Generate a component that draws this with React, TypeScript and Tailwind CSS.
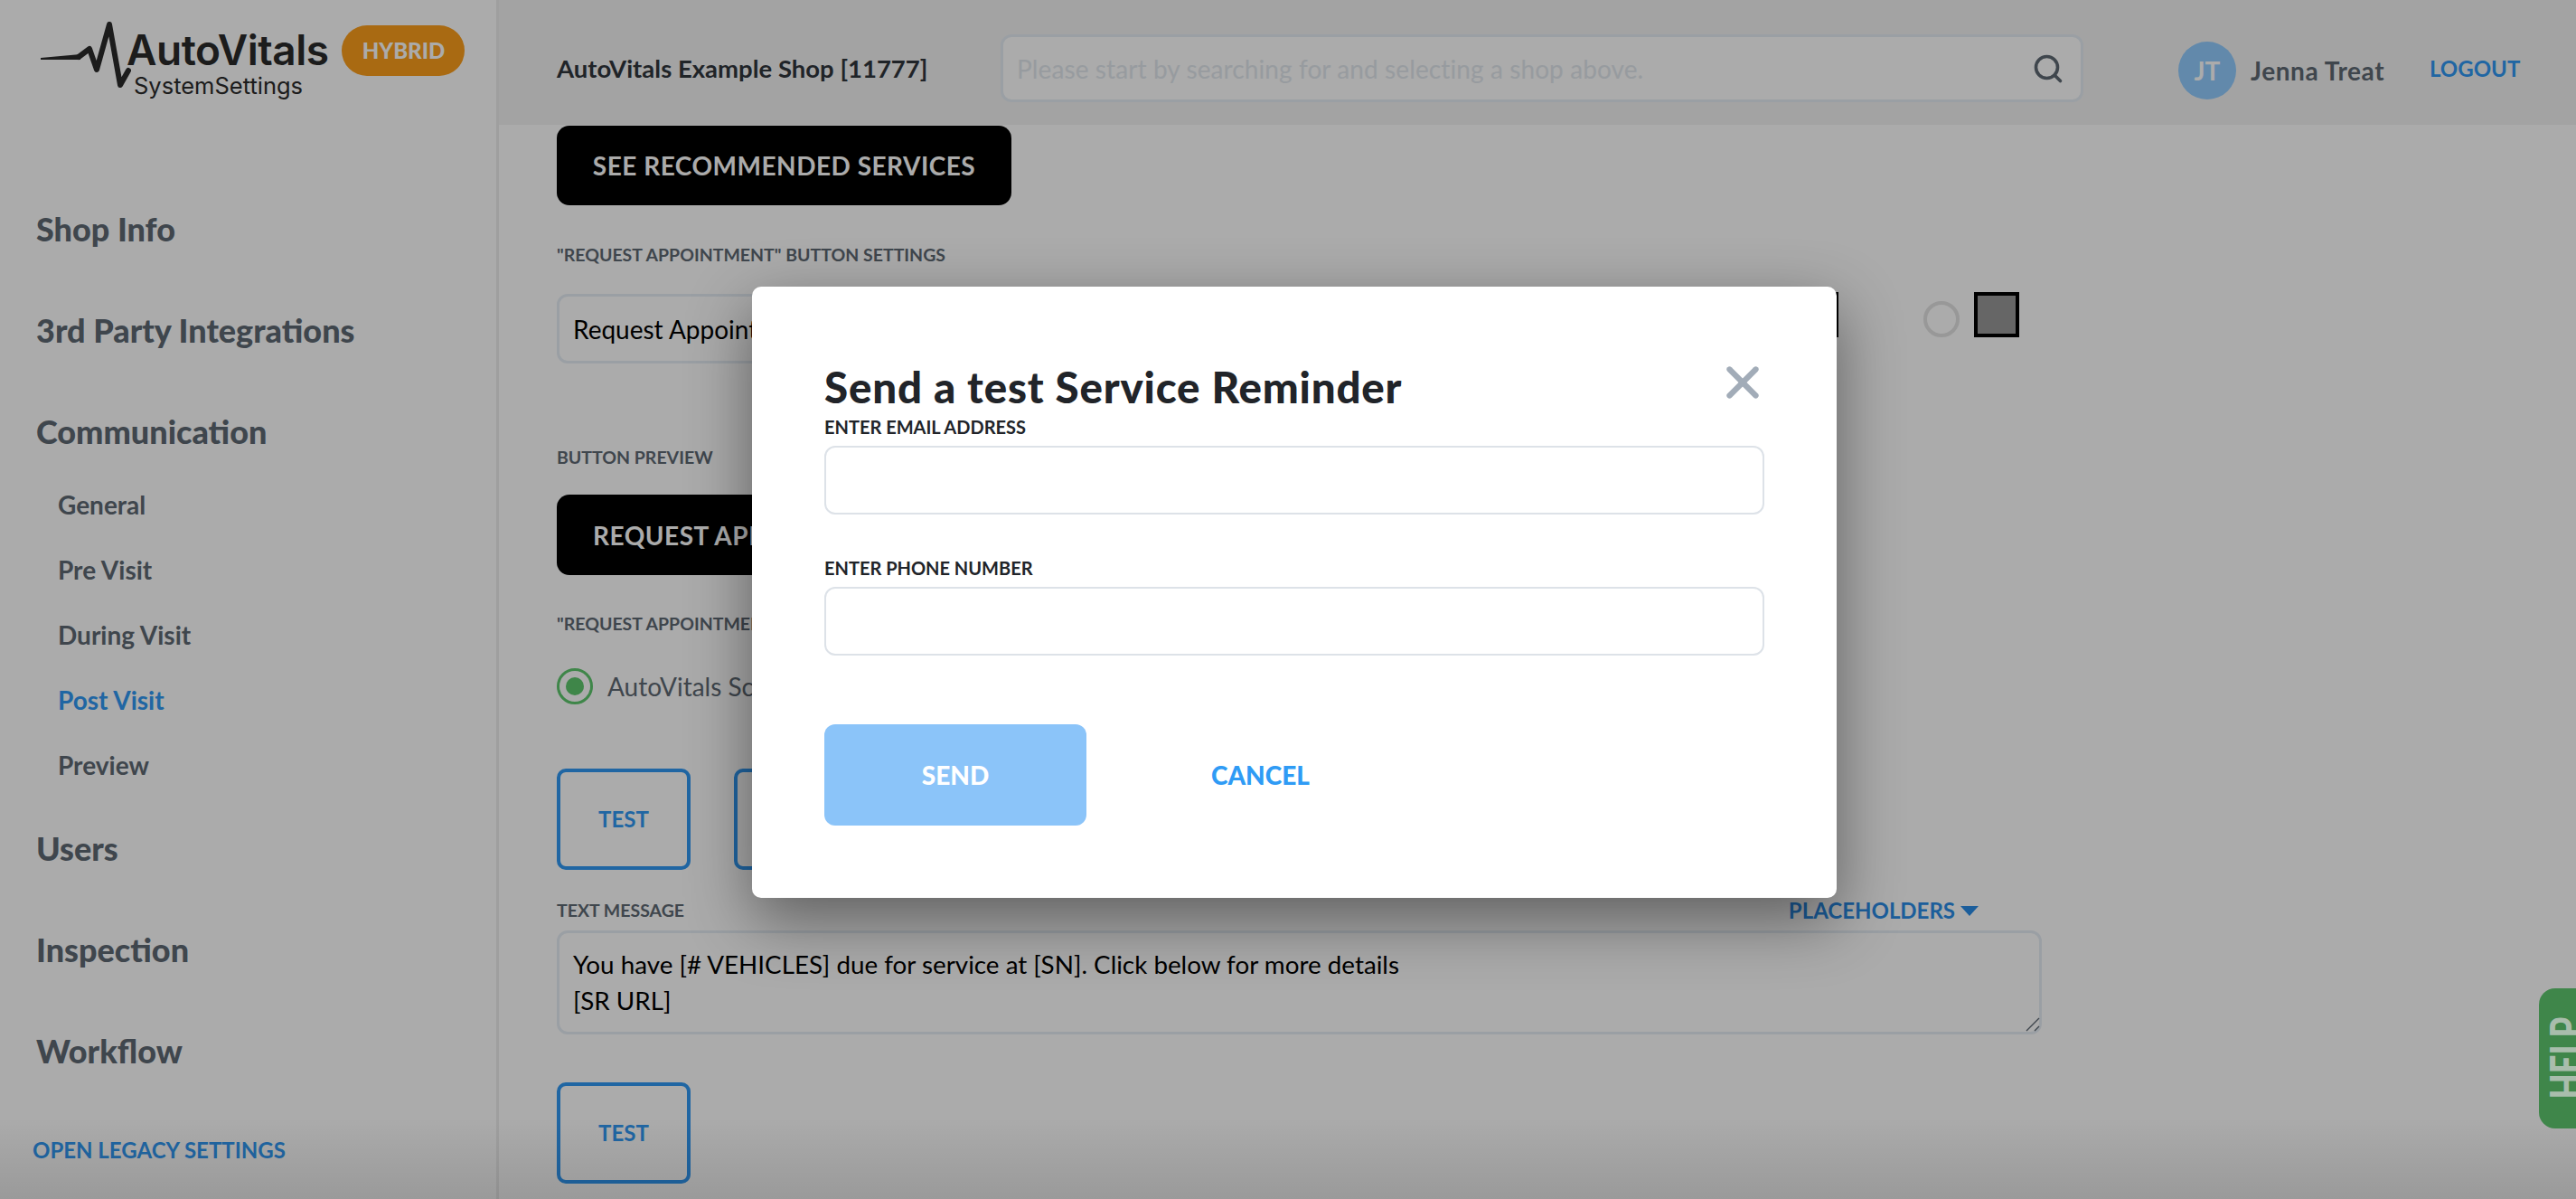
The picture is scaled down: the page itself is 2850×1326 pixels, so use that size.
import { Search, X } from "lucide-react";

const labelClass = "h-6 text-[19.5px] leading-6 font-bold text-[#5e6973]";
const testClass =
  "flex h-[112px] w-[148px] items-center justify-center rounded-[10px] border-4 border-[#3098f3] text-[24px] font-bold text-[#3098f3]";

function Logo() {
  return (
    <div className="flex h-[90px] items-start pt-[24px] pl-[45px]">
      <svg width="100" height="84" viewBox="45 24 100 84" className="shrink-0">
        <polygon points="45,64 89,60 89,66 45,66" fill="#2b2b2b" />
        <polyline
          points="87,63 99,54 107,77 121,27 133,94 142,78"
          fill="none"
          stroke="#2b2b2b"
          strokeWidth="6"
          strokeLinejoin="round"
          strokeLinecap="round"
        />
      </svg>
      <div className="-ml-[5px] flex flex-col font-['Inter',sans-serif] text-[#2b2b2b]">
        <span className="mt-[7px] h-[48px] text-[46px] leading-[48px] font-semibold tracking-[-0.5px]">
          AutoVitals
        </span>
        <span className="ml-[8px] h-[32px] text-[25.5px] leading-[32px]">
          SystemSettings
        </span>
      </div>
      <div className="mt-[4px] ml-[15px] flex h-[56px] w-[136px] shrink-0 items-center justify-center rounded-full bg-[#fc9e1c] text-[24px] font-black text-white">
        HYBRID
      </div>
    </div>
  );
}

function Sidebar() {
  const top = "h-14 text-[36px] leading-[56px] font-black text-[#5e6973]";
  const sub = "h-[72px] pl-[64px] text-[28px] leading-[72px] font-bold text-[#5e6973]";
  return (
    <aside className="flex h-full w-[552px] shrink-0 flex-col border-r-[3px] border-[#eeeeee] bg-white">
      <Logo />
      <nav className="mt-[135px] flex flex-col pl-[40px]">
        <div className={top}>Shop Info</div>
        <div className={`mt-14 ${top}`}>3rd Party Integrations</div>
        <div className={`mt-14 ${top}`}>Communication</div>
      </nav>
      <div className="mt-[17px] flex flex-col">
        <div className={sub}>General</div>
        <div className={sub}>Pre Visit</div>
        <div className={sub}>During Visit</div>
        <div className="h-[72px] pl-[64px] text-[28px] leading-[72px] font-bold text-[#3098f3]">
          Post Visit
        </div>
        <div className={sub}>Preview</div>
      </div>
      <nav className="mt-[28px] flex flex-col pl-[40px]">
        <div className={top}>Users</div>
        <div className={`mt-14 ${top}`}>Inspection</div>
        <div className={`mt-14 ${top}`}>Workflow</div>
      </nav>
      <div className="mt-[64px] h-9 pl-[36px] text-[24px] leading-9 font-bold text-[#3098f3]">
        OPEN LEGACY SETTINGS
      </div>
    </aside>
  );
}

function Header() {
  return (
    <header className="flex h-[138px] shrink-0 items-center bg-[#f4f4f4] pt-[13px] pl-[64px]">
      <div className="w-[491px] shrink-0 text-[27.5px] font-bold text-[#31363d]">
        AutoVitals Example Shop [11777]
      </div>
      <div className="flex h-[75px] w-[1198px] shrink-0 items-center justify-between rounded-xl border-[3px] border-[#e6edf5] bg-white pr-[18px] pl-[15px]">
        <span className="text-[28px] tracking-[0.1px] text-[#e2e8ee]">
          Please start by searching for and selecting a shop above.
        </span>
        <Search size={36} strokeWidth={2.4} className="text-[#5e6973]" />
      </div>
      <div className="mt-[4px] ml-[105px] flex h-16 w-16 shrink-0 items-center justify-center rounded-full bg-[#92cdff] text-[28px] font-bold text-white">
        JT
      </div>
      <div className="mt-[4px] ml-[16px] w-[198px] shrink-0 text-[28px] font-bold tracking-[0.6px] text-[#5e6973]">
        Jenna Treat
      </div>
      <div className="text-[24px] font-bold text-[#3098f3]">LOGOUT</div>
    </header>
  );
}

function Content() {
  return (
    <div className="flex flex-col pl-[64px]">
      <div className="mt-px flex h-[88px] w-[503px] items-center justify-center rounded-[14px] bg-black text-[28px] font-bold tracking-[0.5px] text-white">
        SEE RECOMMENDED SERVICES
      </div>
      <div className={`mt-[43px] ${labelClass}`}>"REQUEST APPOINTMENT" BUTTON SETTINGS</div>
      <div className="mt-[29px] flex h-[79px] items-start">
        <div className="mt-[2px] flex h-[77px] w-[1300px] items-center rounded-xl border-[3px] border-[#e6edf5] bg-white pl-[15px] text-[28px] text-black">
          Request Appointment
        </div>
        <div className="ml-[68px] h-[50px] w-[50px] bg-black" />
        <div className="mt-[10px] ml-[94px] h-10 w-10 rounded-full border-4 border-[#e3e3e3]" />
        <div className="ml-[16px] h-[50px] w-[50px] border-4 border-black bg-[#999999]" />
      </div>
      <div className={`mt-[92px] ${labelClass}`}>BUTTON PREVIEW</div>
      <div className="mt-[29px] flex h-[89px] w-[500px] items-center rounded-[14px] bg-black pl-[40px] text-[28px] font-bold tracking-[0.5px] text-white">
        REQUEST APPOINTMENT
      </div>
      <div className={`mt-[42px] ${labelClass}`}>"REQUEST APPOINTMENT" BUTTON LINK</div>
      <div className="mt-[37px] flex h-10 items-center">
        <div className="flex h-10 w-10 items-center justify-center rounded-full border-[3px] border-[#5ec86e]">
          <div className="h-5 w-5 rounded-full bg-[#5ec86e]" />
        </div>
        <span className="ml-[16px] text-[28px] text-[#5e6973]">AutoVitals Scheduler</span>
      </div>
      <div className="mt-[71px] flex gap-12">
        <div className={testClass}>TEST</div>
        <div className={testClass}>TEST</div>
      </div>
      <div className="mt-[33px] flex h-6 w-[1573px] items-center justify-between">
        <div className={labelClass}>TEXT MESSAGE</div>
        <div className="flex items-center gap-[6px] text-[24px] leading-6 font-bold text-[#2a8de8]">
          PLACEHOLDERS
          <span className="h-0 w-0 border-x-[10px] border-t-[11px] border-x-transparent border-t-[#2a8de8]" />
        </div>
      </div>
      <div className="relative mt-[10px] h-[115px] w-[1643px]">
        <textarea
          readOnly
          className="h-full w-full resize-none rounded-xl border-[3px] border-[#e6edf5] bg-white px-[15px] pt-[15px] text-[27.8px] leading-10 text-black outline-none"
          defaultValue={"You have [# VEHICLES] due for service at [SN]. Click below for more details\n[SR URL]"}
        />
        <svg width="16" height="16" viewBox="0 0 16 16" className="absolute right-[2px] bottom-[3px]">
          <path d="M1 15 L15 1 M10 15 L15 10" stroke="#5e6973" strokeWidth="1.4" fill="none" />
        </svg>
      </div>
      <div className={`mt-[53px] ${testClass}`}>TEST</div>
    </div>
  );
}

function Modal() {
  const inputClass = "mt-[9px] h-[76px] w-full rounded-xl border-2 border-[#dde2e8] bg-white";
  return (
    <div className="absolute inset-0 flex justify-center bg-black/33 pt-[317px] pl-[14px]">
      <div className="absolute inset-x-0 bottom-0 h-[90px] bg-gradient-to-b from-transparent to-black/10" />
      <div className="relative flex h-[676px] w-[1200px] flex-col rounded-[10px] bg-white px-[80px] shadow-[0_24px_70px_rgba(0,0,0,0.45)]">
        <X
          size={58}
          strokeWidth={2.6}
          className="absolute top-[77px] right-[75px] text-[#a2acb8]"
        />
        <h2 className="mt-[81px] h-[60px] text-[47.5px] leading-[60px] font-black tracking-[0.8px] text-[#212429]">
          Send a test Service Reminder
        </h2>
        <div className="mt-[2px] h-6 text-[20px] leading-6 font-bold text-[#212429]">ENTER EMAIL ADDRESS</div>
        <div className={inputClass} />
        <div className="mt-[47px] h-6 text-[20px] leading-6 font-bold text-[#212429]">ENTER PHONE NUMBER</div>
        <div className={inputClass} />
        <div className="mt-[76px] flex items-center">
          <div className="flex h-[112px] w-[290px] items-center justify-center rounded-xl bg-[#8bc4f9] text-[28px] font-black text-white">
            SEND
          </div>
          <div className="ml-[138px] text-[28px] font-black text-[#2f9bf5]">CANCEL</div>
        </div>
      </div>
    </div>
  );
}

export default function App() {
  return (
    <div className="relative flex h-screen w-screen overflow-hidden bg-white font-['Lato',sans-serif]">
      <Sidebar />
      <main className="flex min-w-0 flex-1 flex-col">
        <Header />
        <Content />
      </main>
      <Modal />
      <div className="absolute top-[1093px] right-0 h-[155px] w-[41px] overflow-hidden rounded-l-[18px] bg-[#3f864a]">
        <span className="absolute top-[51px] left-[-36px] h-[52px] w-[130px] -rotate-90 scale-x-[0.7] text-center text-[52px] leading-none font-black text-[#a9bdac]">
          HELP
        </span>
      </div>
    </div>
  );
}
